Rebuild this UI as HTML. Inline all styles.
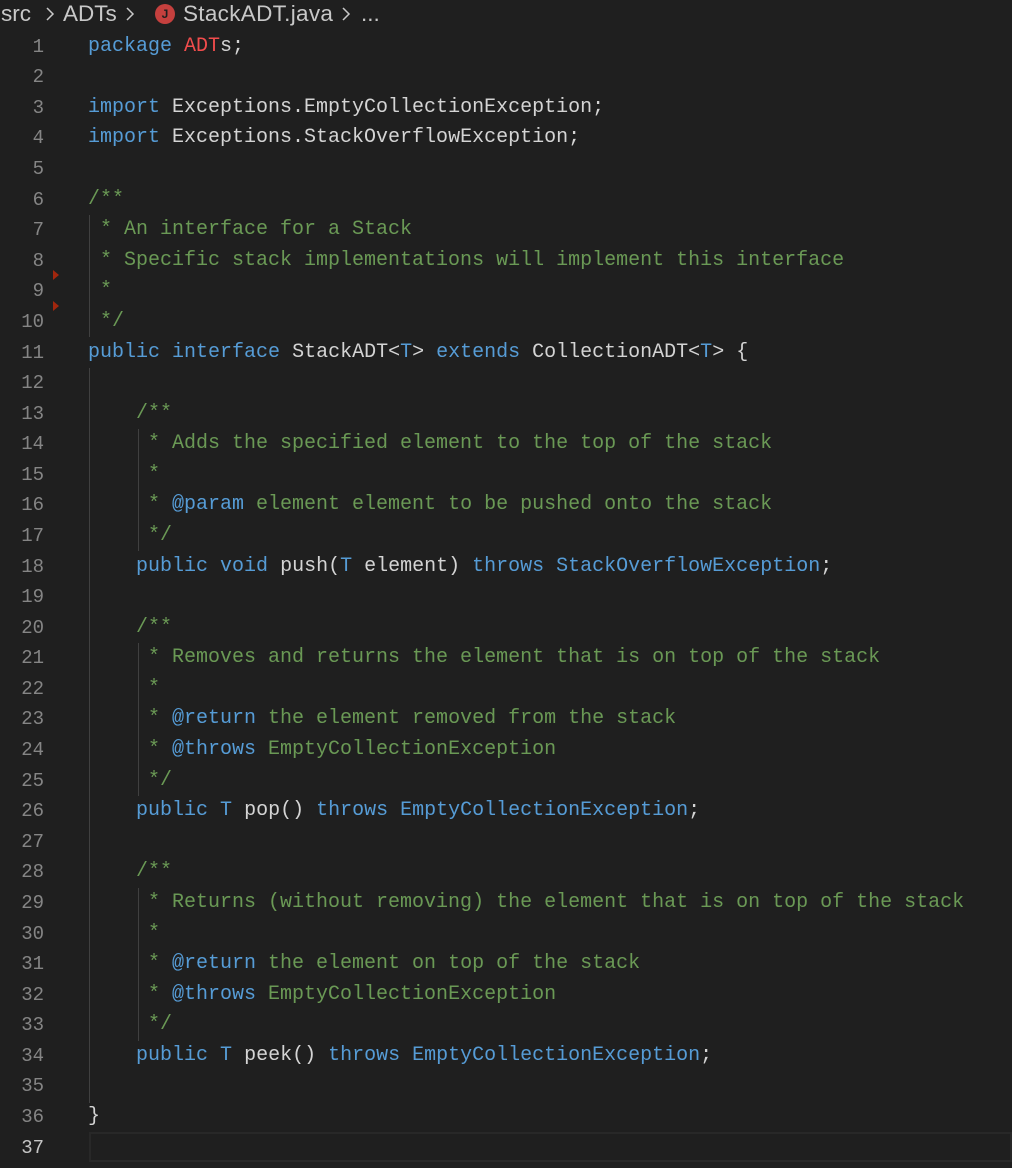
<!DOCTYPE html>
<html><head><meta charset="utf-8"><style>
body{margin:0;width:1012px;height:1168px;background:#1f1f1f;overflow:hidden;position:relative;font-family:"Liberation Mono",monospace;}
.bc{position:absolute;top:0;height:28px;font-family:"Liberation Sans",sans-serif;font-size:22.5px;color:#c8c8c8;line-height:28px;white-space:pre}
.chev{position:absolute;top:6px}
.j{position:absolute;left:155px;top:4px;width:20px;height:20px;border-radius:50%;background:#c5403e;color:#1f1f1f;font-family:"Liberation Sans",sans-serif;font-size:12px;font-weight:bold;text-align:center;line-height:20px}
.ln{position:absolute;left:0;width:44px;text-align:right;color:#858585;font-size:19px;line-height:30.6px;height:30.6px}
.c{position:absolute;left:88px;font-size:20px;line-height:30.6px;height:30.6px;white-space:pre;color:#d4d4d4}
.k{color:#569cd6}.g{color:#6a9955}.r{color:#f14c4c}
.gd{position:absolute;width:1px;background:#404040}
.cur{position:absolute;left:89px;right:0;top:1132px;height:30px;border:2px solid #282828;box-sizing:border-box}
.m{position:absolute;left:53px;width:0;height:0;border-top:5px solid transparent;border-bottom:5px solid transparent;border-left:6px solid #a1260d}
</style></head><body>
<div class="bc" style="left:1px">src</div>
<svg class="chev" style="left:44px" width="12" height="16"><path d="M3 2 L9 8 L3 14" fill="none" stroke="#c8c8c8" stroke-width="1.5"/></svg>
<div class="bc" style="left:63px">ADTs</div>
<svg class="chev" style="left:124px" width="12" height="16"><path d="M3 2 L9 8 L3 14" fill="none" stroke="#c8c8c8" stroke-width="1.5"/></svg>
<div class="j">J</div>
<div class="bc" style="left:183px;letter-spacing:0.3px">StackADT.java</div>
<svg class="chev" style="left:340px" width="12" height="16"><path d="M3 2 L9 8 L3 14" fill="none" stroke="#c8c8c8" stroke-width="1.5"/></svg>
<div class="bc" style="left:361px">...</div>
<div class="cur"></div>
<div class="gd" style="left:89px;top:215px;height:122px"></div>
<div class="gd" style="left:89px;top:368px;height:735px"></div>
<div class="gd" style="left:138px;top:429px;height:122px"></div>
<div class="gd" style="left:138px;top:643px;height:153px"></div>
<div class="gd" style="left:138px;top:888px;height:153px"></div>
<div class="m" style="top:270px"></div>
<div class="m" style="top:301px"></div>
<script>
var L=[
'<span class="k">package</span> <span class="r">ADT</span>s;',
'',
'<span class="k">import</span> Exceptions.EmptyCollectionException;',
'<span class="k">import</span> Exceptions.StackOverflowException;',
'',
'<span class="g">/**</span>',
'<span class="g"> * An interface for a Stack</span>',
'<span class="g"> * Specific stack implementations will implement this interface</span>',
'<span class="g"> *</span>',
'<span class="g"> */</span>',
'<span class="k">public</span> <span class="k">interface</span> StackADT&lt;<span class="k">T</span>&gt; <span class="k">extends</span> CollectionADT&lt;<span class="k">T</span>&gt; {',
'',
'    <span class="g">/**</span>',
'<span class="g">     * Adds the specified element to the top of the stack</span>',
'<span class="g">     *</span>',
'<span class="g">     * </span><span class="k">@param</span><span class="g"> element element to be pushed onto the stack</span>',
'<span class="g">     */</span>',
'    <span class="k">public</span> <span class="k">void</span> push(<span class="k">T</span> element) <span class="k">throws</span> <span class="k">StackOverflowException</span>;',
'',
'    <span class="g">/**</span>',
'<span class="g">     * Removes and returns the element that is on top of the stack</span>',
'<span class="g">     *</span>',
'<span class="g">     * </span><span class="k">@return</span><span class="g"> the element removed from the stack</span>',
'<span class="g">     * </span><span class="k">@throws</span><span class="g"> EmptyCollectionException</span>',
'<span class="g">     */</span>',
'    <span class="k">public</span> <span class="k">T</span> pop() <span class="k">throws</span> <span class="k">EmptyCollectionException</span>;',
'',
'    <span class="g">/**</span>',
'<span class="g">     * Returns (without removing) the element that is on top of the stack</span>',
'<span class="g">     *</span>',
'<span class="g">     * </span><span class="k">@return</span><span class="g"> the element on top of the stack</span>',
'<span class="g">     * </span><span class="k">@throws</span><span class="g"> EmptyCollectionException</span>',
'<span class="g">     */</span>',
'    <span class="k">public</span> <span class="k">T</span> peek() <span class="k">throws</span> <span class="k">EmptyCollectionException</span>;',
'',
'}',
''];
var h='';
for(var i=0;i<L.length;i++){var t=31.7+i*30.58;
h+='<div class="ln" style="top:'+t+'px'+(i==36?';color:#c6c6c6':'')+'">'+(i+1)+'</div><div class="c" style="top:'+t+'px">'+L[i]+'</div>';}
document.write(h);
</script>
</body></html>
